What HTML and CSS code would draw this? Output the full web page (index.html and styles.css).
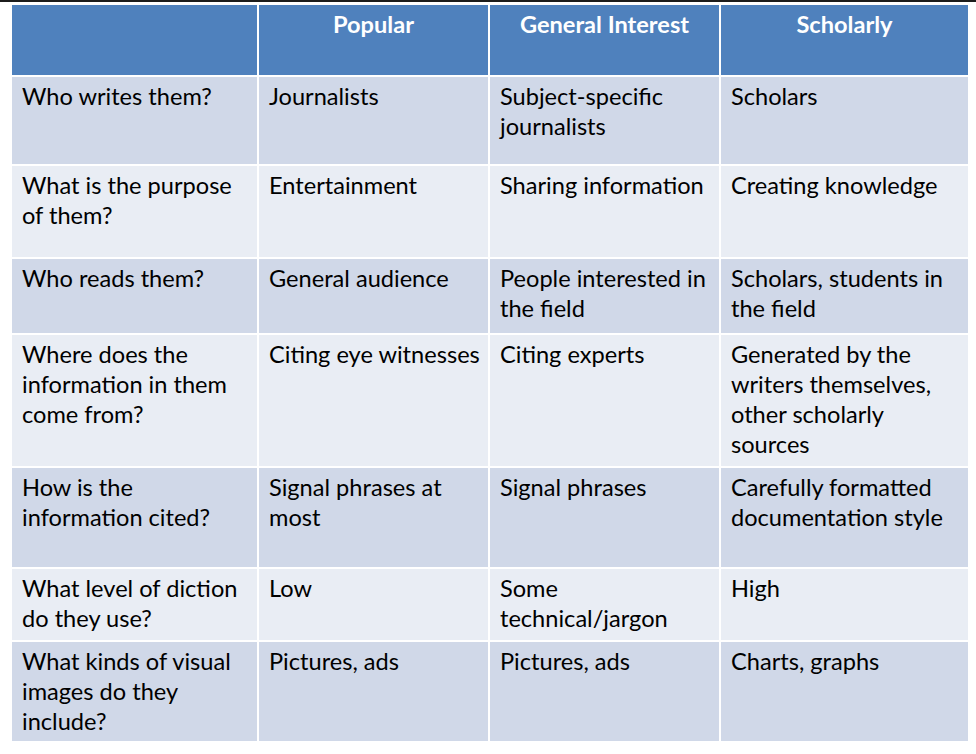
FILE: index.html
```html
<!DOCTYPE html>
<html>
<head>
<meta charset="utf-8">
<link rel="stylesheet" href="styles.css">
</head>
<body>
<div class="topline"></div>
<div class="sheet">
  <div class="grid">
    <div class="cell head"></div>
    <div class="cell head">Popular</div>
    <div class="cell head">General Interest</div>
    <div class="cell head">Scholarly</div>

    <div class="cell odd">Who writes them?</div>
    <div class="cell odd">Journalists</div>
    <div class="cell odd">Subject-specific<br>journalists</div>
    <div class="cell odd">Scholars</div>

    <div class="cell even">What is the purpose<br>of them?</div>
    <div class="cell even">Entertainment</div>
    <div class="cell even">Sharing information</div>
    <div class="cell even">Creating knowledge</div>

    <div class="cell odd">Who reads them?</div>
    <div class="cell odd">General audience</div>
    <div class="cell odd">People interested in<br>the field</div>
    <div class="cell odd">Scholars, students in<br>the field</div>

    <div class="cell even">Where does the<br>information in them<br>come from?</div>
    <div class="cell even">Citing eye witnesses</div>
    <div class="cell even">Citing experts</div>
    <div class="cell even">Generated by the<br>writers themselves,<br>other scholarly<br>sources</div>

    <div class="cell odd">How is the<br>information cited?</div>
    <div class="cell odd">Signal phrases at<br>most</div>
    <div class="cell odd">Signal phrases</div>
    <div class="cell odd">Carefully formatted<br>documentation style</div>

    <div class="cell even">What level of diction<br>do they use?</div>
    <div class="cell even">Low</div>
    <div class="cell even">Some<br>technical/jargon</div>
    <div class="cell even">High</div>

    <div class="cell odd">What kinds of visual<br>images do they<br>include?</div>
    <div class="cell odd">Pictures, ads</div>
    <div class="cell odd">Pictures, ads</div>
    <div class="cell odd">Charts, graphs</div>
  </div>
</div>
</body>
</html>
```

FILE: styles.css
```css
html, body {
  margin: 0;
  padding: 0;
  background: #ffffff;
}

body {
  width: 976px;
  height: 754px;
  overflow: hidden;
  font-family: "Lato", "Liberation Sans", sans-serif;
  color: #000000;
}

.topline {
  height: 2px;
  background: #1c1c1c;
}

.sheet {
  padding: 3px 0 0 12px;
}

.grid {
  display: grid;
  grid-template-columns: 245px 229px 229px 247px;
  grid-template-rows: 70px 87px 91px 74px 131px 99px 71px 99px;
  gap: 2px;
  width: 956px;
}

.cell {
  padding: 4px 0 0 10px;
  font-size: 23.6px;
  line-height: 30px;
  white-space: nowrap;
}

.head {
  background: #4f81bd;
  color: #ffffff;
  font-weight: 700;
  text-align: center;
  padding: 4px 0 0 0;
}

.odd {
  background: #d0d8e8;
}

.even {
  background: #e9edf4;
}
```
